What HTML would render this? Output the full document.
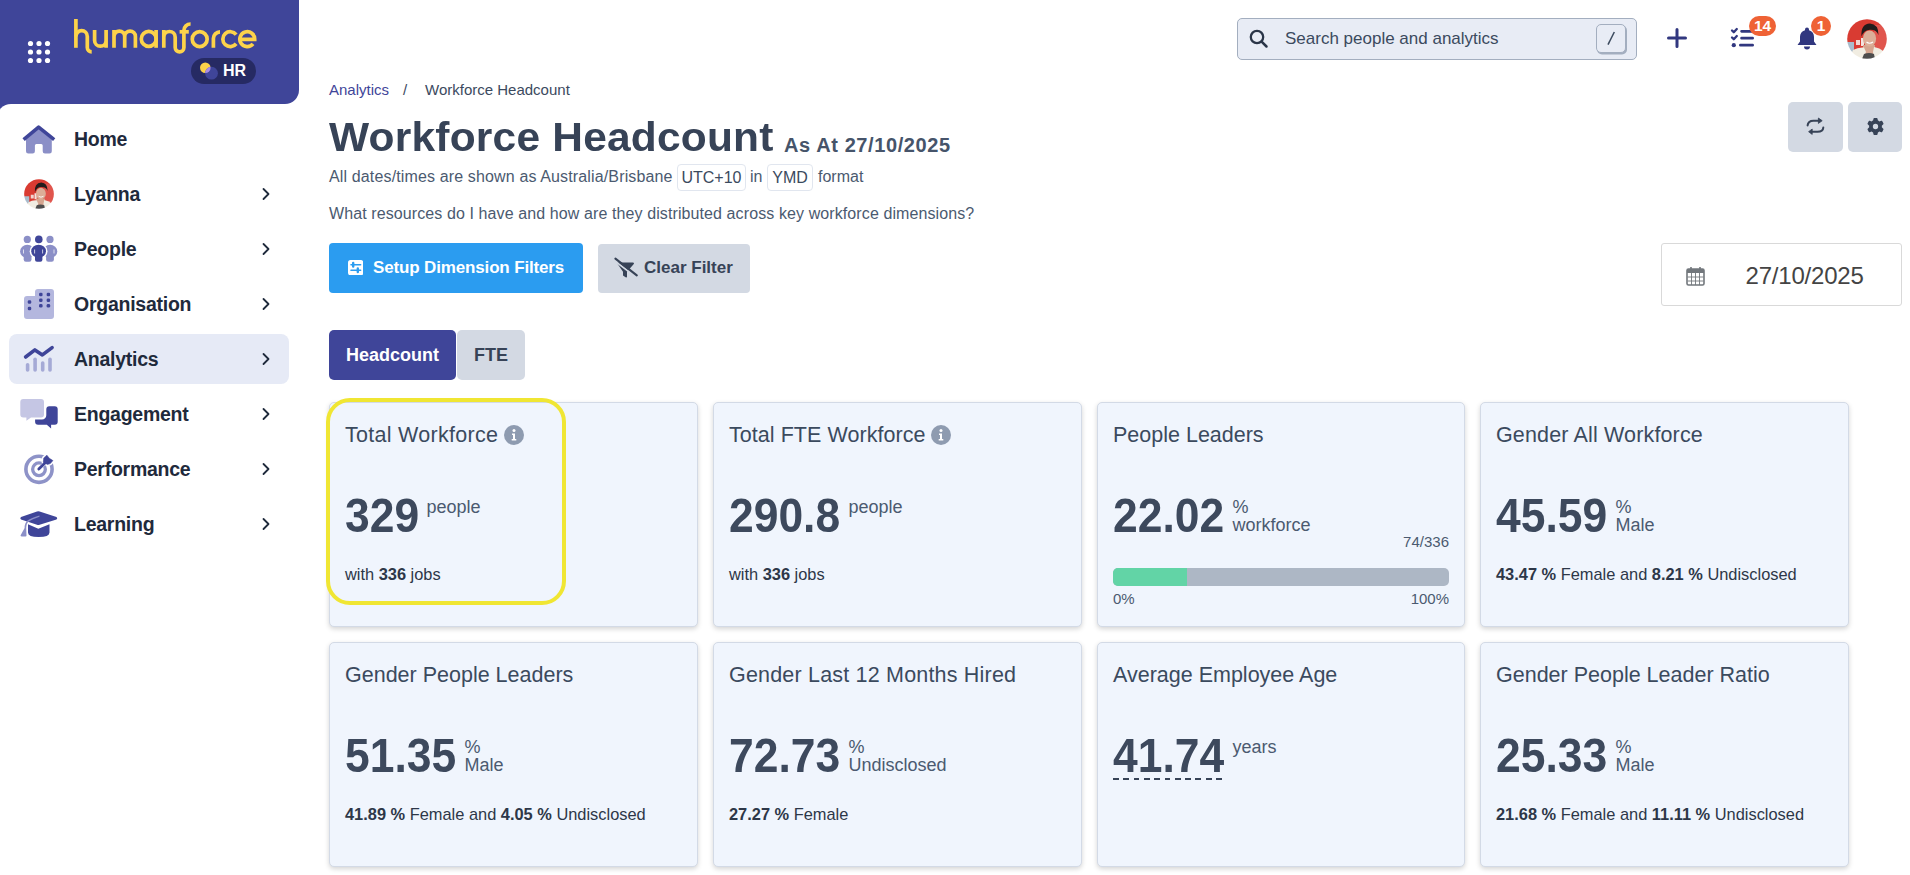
<!DOCTYPE html>
<html><head><meta charset="utf-8">
<style>
*{box-sizing:border-box;margin:0;padding:0}
html,body{width:1910px;height:875px;overflow:hidden;background:#fff;font-family:"Liberation Sans",sans-serif;color:#334155}
.abs{position:absolute}
#hdr{position:absolute;left:0;top:0;width:299px;height:104px;background:#3f4599;border-bottom-right-radius:14px}
#side{position:absolute;left:-3px;top:104px;width:302px;height:771px;background:#fff;border-top-left-radius:14px}
.nav{position:absolute;left:0;width:299px;height:50px}
.nav .lbl{position:absolute;left:74px;top:0;line-height:50px;font-size:19.5px;letter-spacing:-0.25px;font-weight:bold;color:#1f2a3c}
.nav .chev{position:absolute;left:259px;top:18px;width:14px;height:14px}
.nav svg.ic{position:absolute}
.card{position:absolute;width:369px;height:225px;background:#f0f5fd;border:1px solid #d3dae6;border-radius:5px;box-shadow:0 2px 5px rgba(0,0,0,.17)}
.card .t{position:absolute;left:15px;top:20px;font-size:21.5px;color:#3b4a5e;white-space:nowrap}
.card .big{position:absolute;left:15px;top:85px;font-size:48px;letter-spacing:0;transform:scaleX(0.925);transform-origin:0 0;font-weight:bold;color:#3d495d;white-space:nowrap}
.card .sm{position:absolute;font-size:18px;color:#4b5a70;line-height:17.6px;white-space:nowrap}
.card .ft{position:absolute;left:15px;top:162px;font-size:16.4px;color:#2d3748;white-space:nowrap}
.card .ft b{color:#2d3748}
</style></head><body>
<div class="abs" style="left:0;top:90px;width:30px;height:30px;background:#3f4599"></div>
<div id="hdr"></div>
<div id="side"></div>
<svg class="abs" style="left:27px;top:40px" width="24" height="24" viewBox="0 0 24 24"><g fill="#fff">
<circle cx="3.5" cy="3.5" r="2.6"/><circle cx="12" cy="3.5" r="2.6"/><circle cx="20.5" cy="3.5" r="2.6"/>
<circle cx="3.5" cy="12" r="2.6"/><circle cx="12" cy="12" r="2.6"/><circle cx="20.5" cy="12" r="2.6"/>
<circle cx="3.5" cy="20.5" r="2.6"/><circle cx="12" cy="20.5" r="2.6"/><circle cx="20.5" cy="20.5" r="2.6"/></g></svg>
<svg class="abs" style="left:0;top:0" width="299" height="104" viewBox="0 0 299 104"><g fill="none" stroke="#fdd34a" stroke-width="3.7"><circle cx="148.75" cy="38.9" r="7.45"/><circle cx="199.7" cy="39.15" r="7.45"/><path d="M75.9 19 V47.8"/><path d="M75.9 36.4 A5.7 5.7 0 0 1 87.3 36.4 V47.5 A4.4 4.4 0 0 0 91.7 51.9"/><path d="M94.6 30 V40.4 A5.75 5.75 0 0 0 106.1 40.4 M106.1 30 V47.8"/><path d="M114 30 V47.8 M114 36.4 A5.35 5.35 0 0 1 124.7 36.4 V47.8 M124.7 36.4 A5.35 5.35 0 0 1 135.4 36.4 V47.8"/><path d="M156.1 30 V47.8"/><path d="M163.8 30 V47.8 M163.8 37.2 A5.7 5.7 0 0 1 175.2 37.2 V47.6 A4.35 4.35 0 0 0 183.9 47.6 V30.6 A6.6 6.6 0 0 1 190.6 24"/><path d="M179.6 31.8 H188.8"/><path d="M213.4 47.8 V38.6 A6.8 6.8 0 0 1 220 31.8"/><path d="M236.17 34.56 A7.45 7.45 0 1 0 236.17 43.74"/><path d="M239.8 39.4 H254.7 A7.45 7.45 0 1 0 253.01 43.94"/></g></svg>
<div class="abs" style="left:191px;top:58px;width:65px;height:26px;border-radius:13px;background:#262a63"></div>
<svg class="abs" style="left:196px;top:60px" width="24" height="22" viewBox="0 0 24 22"><defs><clipPath id="cpy"><circle cx="9.3" cy="7.7" r="5.3"/></clipPath></defs><circle cx="9.3" cy="7.7" r="5.3" fill="#fdd34a"/><circle cx="15.5" cy="13.2" r="6.4" fill="#3f4599"/><circle cx="15.5" cy="13.2" r="6.4" fill="#a98be6" clip-path="url(#cpy)"/></svg>
<div class="abs" style="left:223px;top:61px;font-size:16px;font-weight:bold;color:#fff;line-height:20px">HR</div>

<!-- nav -->
<div class="nav" style="top:114px"><svg class="ic" style="left:20px;top:8px" width="38" height="34" viewBox="0 0 38 34"><path d="M6 17.5 L18.6 6.5 L31.8 17.5 V29.3 a2.3 2.3 0 0 1 -2.3 2.3 H25 a2.3 2.3 0 0 1 -2.3 -2.3 V23.5 a1.5 1.5 0 0 0 -1.5 -1.5 H16.4 a1.5 1.5 0 0 0 -1.5 1.5 V29.3 a2.3 2.3 0 0 1 -2.3 2.3 H8.3 a2.3 2.3 0 0 1 -2.3 -2.3Z" fill="#8b8fc7"/><path d="M3.6 17.6 L18.6 5.2 L34.2 17.6" fill="none" stroke="#3f4599" stroke-width="3.6" stroke-linejoin="round"/></svg><span class="lbl">Home</span></div>
<div class="nav" style="top:169px"><svg class="ic" style="left:24px;top:10px" width="30" height="30" viewBox="0 0 40 40"><defs><clipPath id="cpa"><circle cx="20" cy="20" r="19.8"/></clipPath><filter id="cpaf" x="-5%" y="-5%" width="110%" height="110%"><feGaussianBlur stdDeviation="0.45"/></filter></defs><g clip-path="url(#cpa)"><g filter="url(#cpaf)"><rect width="40" height="40" fill="#d93a31"/><rect x="27" y="6" width="13" height="26" fill="#e0544d"/><rect x="0" y="23" width="7" height="10" fill="#a9bccc"/><rect x="9" y="21" width="4" height="5" fill="#f2d6d0"/><rect x="14" y="19" width="3" height="8" fill="#f4e4e0"/><path d="M16 26 L28 26 L28 36 L16 36Z" fill="#d5a58f"/><path d="M2 40 L6 31 Q11 28 17 28.5 L19 33 L16 40Z" fill="#f1ede2"/><path d="M27 28 Q33 29 36 32 L39 40 L27 40 L26 33Z" fill="#f1ede2"/><path d="M15 40 L17 35 Q22 33 27 35 L28 40Z" fill="#4d4d4d"/><ellipse cx="22.5" cy="19.5" rx="6.6" ry="8" fill="#dcae98"/><path d="M14.5 17.5 Q13.5 5 23 4.5 Q31.5 5 31.5 16 Q29.5 10.5 23 10.8 Q17 11 14.5 17.5Z" fill="#241c1a"/><path d="M19.5 23 Q22.5 25.5 26 23" stroke="#fff" stroke-width="1.2" fill="none"/></g></g></svg><span class="lbl">Lyanna</span><svg class="chev" viewBox="0 0 14 14"><path d="M4.5 2 L9.5 7 L4.5 12" fill="none" stroke="#1f2a3c" stroke-width="1.8" stroke-linecap="round" stroke-linejoin="round"/></svg></div>
<div class="nav" style="top:224px"><svg class="ic" style="left:20px;top:11px" width="38" height="28" viewBox="0 0 38 28"><defs><mask id="pm"><rect width="38" height="28" fill="#fff"/><ellipse cx="18.6" cy="16.2" rx="8.9" ry="8" fill="#000"/><rect x="13.5" y="19" width="10.3" height="9" fill="#000"/></mask></defs><circle cx="7.3" cy="4.4" r="3.6" fill="#8b8fc7"/><circle cx="18.8" cy="4.4" r="3.8" fill="#3f4599"/><circle cx="30" cy="4.4" r="3.6" fill="#8b8fc7"/><g fill="#8b8fc7" mask="url(#pm)"><ellipse cx="7.3" cy="16.4" rx="7.2" ry="6.6"/><rect x="3.7" y="18" width="7.8" height="8.8" rx="2.2"/><ellipse cx="30.1" cy="16.4" rx="7.2" ry="6.6"/><rect x="26.1" y="18" width="7.8" height="8.8" rx="2.2"/></g><g fill="#3f4599"><ellipse cx="18.6" cy="16.2" rx="7.4" ry="6.5"/><rect x="15" y="19" width="7.4" height="7.8" rx="2"/></g><g stroke="#fff" stroke-width="0.9" opacity="0.8"><path d="M3.5 14.5 V18.5 M14.6 14.5 V18.5 M22.6 14.5 V18.5 M34 14.5 V18.5"/></g></svg><span class="lbl">People</span><svg class="chev" viewBox="0 0 14 14"><path d="M4.5 2 L9.5 7 L4.5 12" fill="none" stroke="#1f2a3c" stroke-width="1.8" stroke-linecap="round" stroke-linejoin="round"/></svg></div>
<div class="nav" style="top:279px"><svg class="ic" style="left:24px;top:10px" width="30" height="30" viewBox="0 0 30 30"><path d="M0 10 a3 3 0 0 1 3 -3 H11 V3 a3 3 0 0 1 3 -3 H27 a3 3 0 0 1 3 3 V27 a3 3 0 0 1 -3 3 H3 a3 3 0 0 1 -3 -3Z" fill="#b4b7de"/><g fill="#3f4599"><rect x="3.75" y="11.25" width="3.5" height="3.5" rx="1.3"/><rect x="3.75" y="17.75" width="3.5" height="3.5" rx="1.3"/><rect x="15.05" y="3.75" width="3.5" height="3.5" rx="1.3"/><rect x="22.65" y="3.75" width="3.5" height="3.5" rx="1.3"/><rect x="15.05" y="9.45" width="3.5" height="3.5" rx="1.3"/><rect x="22.65" y="9.45" width="3.5" height="3.5" rx="1.3"/><rect x="15.05" y="15.05" width="3.5" height="3.5" rx="1.3"/><rect x="22.65" y="15.05" width="3.5" height="3.5" rx="1.3"/></g></svg><span class="lbl">Organisation</span><svg class="chev" viewBox="0 0 14 14"><path d="M4.5 2 L9.5 7 L4.5 12" fill="none" stroke="#1f2a3c" stroke-width="1.8" stroke-linecap="round" stroke-linejoin="round"/></svg></div>
<div class="abs" style="left:9px;top:334px;width:280px;height:50px;background:#e6eaf6;border-radius:8px"></div>
<div class="nav" style="top:334px"><svg class="ic" style="left:23px;top:11px" width="32" height="28" viewBox="0 0 32 28"><g fill="#a5aad6"><rect x="2.8" y="17.9" width="3.6" height="8.9" rx="1.8"/><rect x="10.3" y="12.4" width="3.6" height="14.4" rx="1.8"/><rect x="17.9" y="16.3" width="3.6" height="10.5" rx="1.8"/><rect x="25.2" y="12.4" width="3.6" height="14.4" rx="1.8"/></g><path d="M2.6 12 L11.9 4.9 L19.4 9.9 L29.1 2.6" fill="none" stroke="#3f4599" stroke-width="3.6" stroke-linecap="round" stroke-linejoin="round"/></svg><span class="lbl">Analytics</span><svg class="chev" viewBox="0 0 14 14"><path d="M4.5 2 L9.5 7 L4.5 12" fill="none" stroke="#1f2a3c" stroke-width="1.8" stroke-linecap="round" stroke-linejoin="round"/></svg></div>
<div class="nav" style="top:389px"><svg class="ic" style="left:20px;top:9px" width="38" height="32" viewBox="0 0 38 32"><path d="M3.3 0.9 H21 a3 3 0 0 1 3 3 V16.5 a3 3 0 0 1 -3 3 H11 L6.4 22.7 V19.5 H3.3 a3 3 0 0 1 -3 -3 V3.9 a3 3 0 0 1 3 -3Z" fill="#c5c6e4"/><path d="M29.3 8.3 H34.7 a3 3 0 0 1 3 3 V23.8 a3 3 0 0 1 -3 3 H31.1 V30.4 L26.8 26.8 H18.1 a3 3 0 0 1 -3 -3 V21.5 H22 a4.3 4.3 0 0 0 4.3 -4.3 V11.3 a3 3 0 0 1 3 -3Z" fill="#3f4599"/></svg><span class="lbl">Engagement</span><svg class="chev" viewBox="0 0 14 14"><path d="M4.5 2 L9.5 7 L4.5 12" fill="none" stroke="#1f2a3c" stroke-width="1.8" stroke-linecap="round" stroke-linejoin="round"/></svg></div>
<div class="nav" style="top:444px"><svg class="ic" style="left:23px;top:9px" width="32" height="32" viewBox="0 0 32 32"><circle cx="16" cy="16.3" r="13.1" fill="none" stroke="#8e93c8" stroke-width="3.6"/><circle cx="16" cy="16.3" r="6.35" fill="none" stroke="#8e93c8" stroke-width="3.3"/><g fill="#fff" stroke="#fff" stroke-width="3.4" stroke-linejoin="round" stroke-linecap="round"><path d="M15.8 16.1 L23.5 8.5"/><path d="M20.3 9.2 L20.8 4.9 L23.9 2.2 L26.3 5.3 L29.9 7.6 L27.3 10.6 L24.5 11.4Z"/></g><path d="M15.8 16.1 L23.5 8.5" stroke="#3f4599" stroke-width="2.8" stroke-linecap="round"/><path d="M20.3 9.2 L20.8 4.9 L23.9 2.2 L26.3 5.3 L29.9 7.6 L27.3 10.6 L24.5 11.4Z" fill="#3f4599" stroke="#3f4599" stroke-width="0.6" stroke-linejoin="round"/></svg><span class="lbl">Performance</span><svg class="chev" viewBox="0 0 14 14"><path d="M4.5 2 L9.5 7 L4.5 12" fill="none" stroke="#1f2a3c" stroke-width="1.8" stroke-linecap="round" stroke-linejoin="round"/></svg></div>
<div class="nav" style="top:499px"><svg class="ic" style="left:19px;top:10px" width="40" height="30" viewBox="0 0 40 30"><path d="M9 15.2 L19.3 19.8 L30.5 15.2 V23.5 Q30.5 28 19.6 28 Q9 28 9 23.5Z" fill="#3f4599"/><path d="M2 8 L18 2.6 Q19.3 2.1 20.6 2.6 L37.5 8 Q39 9.3 37.5 10.5 L20.6 15.8 Q19.3 16.3 18 15.8 L2 10.5 Q0.5 9.3 2 8Z" fill="#3f4599"/><path d="M20.5 6.6 Q12 9 8.5 11.5 Q5.5 14 5.6 19 L1.5 26.5 Q1.6 27.5 3 27.5 L6.5 27.5 Q7.5 27.5 7.5 26.5 L7.2 19 Q7.3 14.5 9.5 12.8 Q12 11 20.5 7.8Z" fill="#8b8fc7"/></svg><span class="lbl">Learning</span><svg class="chev" viewBox="0 0 14 14"><path d="M4.5 2 L9.5 7 L4.5 12" fill="none" stroke="#1f2a3c" stroke-width="1.8" stroke-linecap="round" stroke-linejoin="round"/></svg></div>


<!-- topbar -->
<div class="abs" style="left:1237px;top:18px;width:400px;height:42px;background:#e8ecf5;border:1px solid #a3aebf;border-radius:5px"></div>
<svg class="abs" style="left:1249px;top:29px" width="20" height="20" viewBox="0 0 20 20"><circle cx="8" cy="8" r="6.2" fill="none" stroke="#2a3548" stroke-width="2.3"/><path d="M12.6 12.6 L17.5 17.5" stroke="#2a3548" stroke-width="2.5" stroke-linecap="round"/></svg>
<div class="abs" style="left:1285px;top:29px;font-size:17px;line-height:20px;color:#3b4a5e">Search people and analytics</div>
<div class="abs" style="left:1596px;top:24px;width:30px;height:29px;background:#e8ecf5;border:1px solid #a3aebf;border-radius:5px;box-shadow:1px 1.5px 0 #a3aebf"></div>
<svg class="abs" style="left:1600px;top:26px" width="24" height="24" viewBox="0 0 24 24"><path d="M14.3 6 L8 18.7" stroke="#3b4a5e" stroke-width="1.5"/></svg>
<svg class="abs" style="left:1667px;top:28px" width="20" height="20" viewBox="0 0 20 20"><path d="M10 1.5 V18.5 M1.5 10 H18.5" stroke="#31377f" stroke-width="3" stroke-linecap="round"/></svg>
<svg class="abs" style="left:1729px;top:27px" width="26" height="22" viewBox="0 0 26 22"><g fill="none" stroke="#31377f" stroke-width="2.3" stroke-linecap="round" stroke-linejoin="round"><path d="M3 3.5 L4.8 5.3 L7.8 2"/><path d="M3 10.5 L4.8 12.3 L7.8 9"/><path d="M12.6 4.3 H23.6 M12.6 11.2 H23.6 M11.4 18.2 H23.6" stroke-width="2.8"/></g><circle cx="4.8" cy="18.2" r="2.1" fill="#31377f"/></svg>
<div class="abs" style="left:1749px;top:16px;width:27px;height:20px;border-radius:10px;background:#ef6235;color:#fff;font-size:15.5px;font-weight:bold;line-height:19.5px;text-align:center">14</div>
<svg class="abs" style="left:1796px;top:26px" width="22" height="24" viewBox="0 0 22 24"><path d="M11 1.5 a2 2 0 0 1 2 2 V4.2 A7 7 0 0 1 18 11 V15.5 L20.5 19 H1.5 L4 15.5 V11 A7 7 0 0 1 9 4.2 V3.5 a2 2 0 0 1 2 -2Z" fill="#31377f"/><path d="M8 20.5 H14 a3 3 0 0 1 -6 0Z" fill="#31377f"/></svg>
<div class="abs" style="left:1811px;top:16px;width:20px;height:20px;border-radius:10px;background:#ef6235;color:#fff;font-size:15.5px;font-weight:bold;line-height:19.5px;text-align:center">1</div>
<svg class="abs" style="left:1847px;top:19px" width="40" height="40" viewBox="0 0 40 40"><defs><clipPath id="cpb"><circle cx="20" cy="20" r="19.8"/></clipPath><filter id="cpbf" x="-5%" y="-5%" width="110%" height="110%"><feGaussianBlur stdDeviation="0.45"/></filter></defs><g clip-path="url(#cpb)"><g filter="url(#cpbf)"><rect width="40" height="40" fill="#d93a31"/><rect x="27" y="6" width="13" height="26" fill="#e0544d"/><rect x="0" y="23" width="7" height="10" fill="#a9bccc"/><rect x="9" y="21" width="4" height="5" fill="#f2d6d0"/><rect x="14" y="19" width="3" height="8" fill="#f4e4e0"/><path d="M16 26 L28 26 L28 36 L16 36Z" fill="#d5a58f"/><path d="M2 40 L6 31 Q11 28 17 28.5 L19 33 L16 40Z" fill="#f1ede2"/><path d="M27 28 Q33 29 36 32 L39 40 L27 40 L26 33Z" fill="#f1ede2"/><path d="M15 40 L17 35 Q22 33 27 35 L28 40Z" fill="#4d4d4d"/><ellipse cx="22.5" cy="19.5" rx="6.6" ry="8" fill="#dcae98"/><path d="M14.5 17.5 Q13.5 5 23 4.5 Q31.5 5 31.5 16 Q29.5 10.5 23 10.8 Q17 11 14.5 17.5Z" fill="#241c1a"/><path d="M19.5 23 Q22.5 25.5 26 23" stroke="#fff" stroke-width="1.2" fill="none"/></g></g></svg>

<!-- page header -->
<div class="abs" style="left:329px;top:80px;font-size:15px;line-height:20px;color:#3f4599">Analytics</div>
<div class="abs" style="left:403px;top:80px;font-size:15px;line-height:20px;color:#3b4a5e">/</div>
<div class="abs" style="left:425px;top:80px;font-size:15px;line-height:20px;color:#3b4a5e">Workforce Headcount</div>
<div class="abs" style="left:329px;top:112px;font-size:40px;font-weight:bold;line-height:50px;color:#374357;white-space:nowrap;transform:scaleX(1.062);transform-origin:0 0;letter-spacing:0.2px">Workforce Headcount</div><div class="abs" style="left:784px;top:112px;font-size:20px;font-weight:bold;line-height:50px;color:#46546a;white-space:nowrap;padding-top:7.5px;letter-spacing:0.6px">As At 27/10/2025</div>
<div class="abs" style="left:329px;top:167px;font-size:16px;letter-spacing:0.14px;line-height:20px;color:#4b5a70;white-space:nowrap">All dates/times are shown as Australia/Brisbane</div>
<div class="abs" style="left:677px;top:164px;width:69px;height:27px;border:1px solid #e1e6ef;border-radius:4px;font-size:16px;line-height:25px;text-align:center;color:#3b4a5e">UTC+10</div>
<div class="abs" style="left:750px;top:167px;font-size:16px;line-height:20px;color:#4b5a70">in</div>
<div class="abs" style="left:767px;top:164px;width:46px;height:27px;border:1px solid #e1e6ef;border-radius:4px;font-size:16px;line-height:25px;text-align:center;color:#3b4a5e">YMD</div>
<div class="abs" style="left:818px;top:167px;font-size:16px;line-height:20px;color:#4b5a70">format</div>
<div class="abs" style="left:329px;top:203.5px;font-size:16px;letter-spacing:0.1px;line-height:20px;color:#4b5a70;white-space:nowrap">What resources do I have and how are they distributed across key workforce dimensions?</div>

<!-- right buttons -->
<div class="abs" style="left:1788px;top:102px;width:55px;height:50px;background:#d3d9e3;border-radius:5px"></div>
<svg class="abs" style="left:1803px;top:115px" width="24" height="24" viewBox="0 0 24 24"><g fill="none" stroke="#374357" stroke-width="2" stroke-linecap="round"><path d="M4.6 10.4 Q5 5.7 10.5 5.7 H15.8"/><path d="M20.3 12.6 Q20 16.7 14.5 16.7 H8.8"/></g><g fill="#374357" stroke="#374357" stroke-width="0.8" stroke-linejoin="round"><path d="M15.4 3 L19.2 5.7 L15.4 8.4Z"/><path d="M9.2 14 L5.6 16.7 L9.2 19.4Z"/></g></svg>
<div class="abs" style="left:1848px;top:102px;width:54px;height:50px;background:#d3d9e3;border-radius:5px"></div>
<svg class="abs" style="left:1866.5px;top:118px" width="17" height="17" viewBox="0 0 512 512"><path fill="#374357" d="M495.9 166.6c3.2 8.7 .5 18.4-6.4 24.6l-43.3 39.4c1.1 8.3 1.7 16.8 1.7 25.4s-.6 17.1-1.7 25.4l43.3 39.4c6.9 6.2 9.6 15.9 6.4 24.6c-4.4 11.9-9.7 23.3-15.8 34.3l-4.7 8.1c-6.6 11-14 21.4-22.1 31.2c-5.9 7.2-15.7 9.6-24.5 6.8l-55.7-17.7c-13.4 10.3-28.2 18.9-44 25.4l-12.5 57.1c-2 9.1-9 16.3-18.2 17.8c-13.8 2.300-28 3.500-42.5 3.500s-28.700-1.200-42.500-3.500c-9.200-1.500-16.200-8.700-18.200-17.800l-12.500-57.100c-15.800-6.500-30.600-15.100-44-25.400L83.100 425.900c-8.800 2.800-18.600 .3-24.500-6.800c-8.100-9.800-15.500-20.200-22.100-31.200l-4.700-8.100c-6.100-11-11.400-22.400-15.800-34.300c-3.200-8.700-.5-18.400 6.400-24.600l43.300-39.400C64.600 273.100 64 264.600 64 256s.6-17.100 1.700-25.400L22.400 191.200c-6.900-6.200-9.600-15.900-6.400-24.600c4.400-11.900 9.700-23.300 15.800-34.300l4.700-8.100c6.600-11 14-21.400 22.100-31.200c5.900-7.200 15.700-9.600 24.500-6.800l55.700 17.700c13.400-10.300 28.200-18.900 44-25.400l12.500-57.100c2-9.100 9-16.300 18.200-17.800C227.300 1.200 241.500 0 256 0s28.700 1.200 42.500 3.500c9.200 1.500 16.200 8.700 18.200 17.800l12.500 57.100c15.800 6.500 30.600 15.100 44 25.400l55.700-17.700c8.800-2.800 18.600-.3 24.500 6.800c8.100 9.800 15.500 20.200 22.100 31.200l4.700 8.100c6.100 11 11.400 22.400 15.800 34.300zM256 336a80 80 0 1 0 0-160 80 80 0 1 0 0 160z"/></svg>

<!-- action buttons -->
<div class="abs" style="left:329px;top:243px;width:254px;height:50px;background:#2b9cf0;border-radius:4px"></div>
<svg class="abs" style="left:347.5px;top:259.8px" width="15.3" height="15.3" viewBox="0 0 15.3 15.3"><rect x="0" y="0" width="15.3" height="15.3" rx="2.6" fill="#fff"/><g stroke="#2b9cf0" stroke-linecap="round"><path d="M3 4.8 H12.6 M3 10.2 H12.6" stroke-width="1.6"/><path d="M5.2 3 V6.6 M9.8 8.4 V12" stroke-width="2.4"/></g></svg>
<div class="abs" style="left:373px;top:257px;font-size:17px;font-weight:bold;line-height:22px;color:#fff;white-space:nowrap;letter-spacing:-0.15px">Setup Dimension Filters</div>
<div class="abs" style="left:598px;top:244px;width:152px;height:49px;background:#d3d9e3;border-radius:4px"></div>
<svg class="abs" style="left:613px;top:257px" width="26" height="23" viewBox="0 0 26 23"><path d="M3.6 5.6 H20 Q21.6 5.8 20.8 7 L14 14.8 V19.8 Q13.8 21 12.6 20.3 L10 18.6 V14.8Z" fill="#374357"/><path d="M0.9 3.3 L22.9 20.1" stroke="#d3d9e3" stroke-width="1.7"/><path d="M2.4 1.7 L23.8 18.3" stroke="#374357" stroke-width="2.1" stroke-linecap="round"/></svg>
<div class="abs" style="left:644px;top:257px;font-size:17px;font-weight:bold;line-height:22px;color:#374357;white-space:nowrap">Clear Filter</div>

<!-- date input -->
<div class="abs" style="left:1661px;top:243px;width:241px;height:63px;background:#fff;border:1px solid #d9d9d9;border-radius:3px"></div>
<svg class="abs" style="left:1686px;top:266px" width="19" height="20" viewBox="0 0 19 20"><rect x="1" y="3" width="17" height="16" rx="1.5" fill="none" stroke="#72777c" stroke-width="1.6"/><rect x="1" y="3" width="17" height="4" fill="#72777c"/><path d="M5 1 V5 M14 1 V5" stroke="#72777c" stroke-width="1.6"/><path d="M1.5 11 H17.5 M1.5 15 H17.5 M5.5 7 V19 M9.5 7 V19 M13.5 7 V19" stroke="#72777c" stroke-width="0.9"/></svg>
<div class="abs" style="left:1745.5px;top:262px;font-size:24px;letter-spacing:-0.2px;line-height:28px;color:#444;white-space:nowrap">27/10/2025</div>

<!-- tabs -->
<div class="abs" style="left:329px;top:330px;width:127px;height:50px;background:#3f4599;border-radius:5px;color:#fff;font-size:17px;font-weight:bold;line-height:50px;padding-top:0px;font-size:18px;text-align:center">Headcount</div>
<div class="abs" style="left:457px;top:330px;width:68px;height:50px;background:#d3d9e3;border-radius:5px;color:#374357;font-size:17px;font-weight:bold;line-height:50px;padding-top:0px;font-size:18px;text-align:center">FTE</div>

<!-- cards -->
<div class="card" style="left:329px;top:402px"><div class="t" style="letter-spacing:0.28px">Total Workforce</div><div class="big">329</div><svg class="abs" style="left:174px;top:22px" width="20" height="20" viewBox="0 0 20 20"><circle cx="10" cy="10" r="10" fill="#8e9bb0"/><circle cx="10" cy="5.6" r="1.5" fill="#fff"/><path d="M8 8.5 H11 V14 H12.3 V15.5 H7.7 V14 H9 V10 H8Z" fill="#fff"/></svg><div class="sm" style="left:96.5px;top:96px">people</div><div class="ft">with <b>336</b> jobs</div></div>
<div class="card" style="left:713px;top:402px"><div class="t" style="letter-spacing:0.05px">Total FTE Workforce</div><div class="big">290.8</div><svg class="abs" style="left:217px;top:22px" width="20" height="20" viewBox="0 0 20 20"><circle cx="10" cy="10" r="10" fill="#8e9bb0"/><circle cx="10" cy="5.6" r="1.5" fill="#fff"/><path d="M8 8.5 H11 V14 H12.3 V15.5 H7.7 V14 H9 V10 H8Z" fill="#fff"/></svg><div class="sm" style="left:134.5px;top:96px">people</div><div class="ft">with <b>336</b> jobs</div></div>
<div class="card" style="left:1097px;top:402px;width:368px"><div class="t">People Leaders</div><div class="big">22.02</div><div class="sm" style="left:134.5px;top:96px">%<br>workforce</div><div class="sm" style="right:15px;top:130px;font-size:15px">74/336</div><div class="abs" style="left:15px;top:165px;width:336px;height:18px;border-radius:5px;background:#adb7c5;overflow:hidden"><div style="width:74px;height:18px;background:#62d4a6"></div></div><div class="sm" style="left:15px;top:187px;font-size:15px">0%</div><div class="sm" style="right:15px;top:187px;font-size:15px">100%</div></div>
<div class="card" style="left:1480px;top:402px"><div class="t" style="letter-spacing:0.15px">Gender All Workforce</div><div class="big">45.59</div><div class="sm" style="left:134.5px;top:96px">%<br>Male</div><div class="ft"><b>43.47 %</b> Female and <b>8.21 %</b> Undisclosed</div></div>
<div class="card" style="left:329px;top:642px"><div class="t">Gender People Leaders</div><div class="big">51.35</div><div class="sm" style="left:134.5px;top:96px">%<br>Male</div><div class="ft"><b>41.89 %</b> Female and <b>4.05 %</b> Undisclosed</div></div>
<div class="card" style="left:713px;top:642px"><div class="t" style="letter-spacing:0.19px">Gender Last 12 Months Hired</div><div class="big">72.73</div><div class="sm" style="left:134.5px;top:96px">%<br>Undisclosed</div><div class="ft"><b>27.27 %</b> Female</div></div>
<div class="card" style="left:1097px;top:642px;width:368px"><div class="t">Average Employee Age</div><div class="big">41.74</div><div class="sm" style="left:134.5px;top:96px">years</div><div class="abs" style="left:15px;top:135px;width:109px;height:2px;background:repeating-linear-gradient(90deg,#374357 0 5.8px,transparent 5.8px 10.3px)"></div></div>
<div class="card" style="left:1480px;top:642px"><div class="t">Gender People Leader Ratio</div><div class="big">25.33</div><div class="sm" style="left:134.5px;top:96px">%<br>Male</div><div class="ft"><b>21.68 %</b> Female and <b>11.11 %</b> Undisclosed</div></div>
<div class="abs" style="left:326px;top:398px;width:240px;height:207px;border:4px solid #f0e633;border-radius:24px"></div>
</body></html>
